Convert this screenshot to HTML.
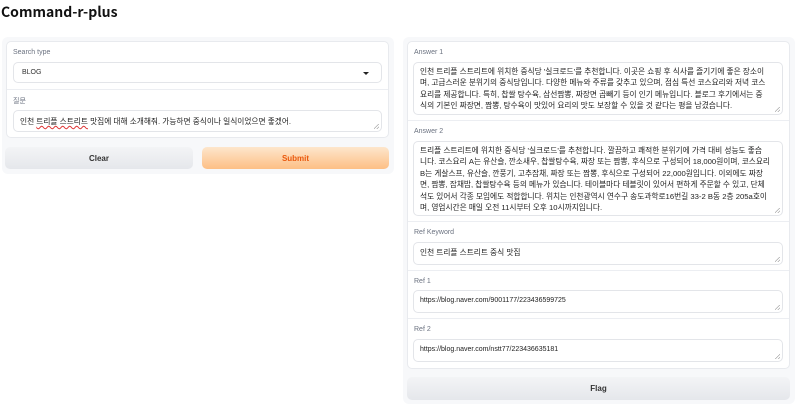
<!DOCTYPE html>
<html><head><meta charset="utf-8"><style>
*{box-sizing:border-box;margin:0;padding:0}
body{width:800px;height:408px;background:#fff;font-family:"Liberation Sans","Noto Sans CJK KR",sans-serif;position:relative;overflow:hidden;color:#1f2937}
.a{position:absolute}
.outer{background:#f7f8fa;border-radius:6px}
.inner{background:#fff;border:1px solid #e8eaee;border-radius:5px}
.lbl{font-size:7px;color:#6b7280}
.ta{background:#fff;border:1px solid #e3e5e9;border-radius:5px;font-size:7.7px;line-height:11.4px;padding:3px 6px;color:#222;white-space:nowrap;overflow:hidden}
.ta:after{content:"";position:absolute;right:2px;bottom:2px;width:5px;height:5px;background:linear-gradient(135deg,transparent 45%,#aaa 45%,#aaa 55%,transparent 55%,transparent 75%,#aaa 75%,#aaa 85%,transparent 85%)}
.sep{height:1px;background:#eceef2}
.btn{border-radius:5px;font-size:8px;font-weight:bold;display:flex;align-items:center;justify-content:center}
</style></head><body>
<div class="a" style="left:1px;top:2px;font-size:14px;font-weight:bold;color:#111;font-family:'Noto Sans CJK KR','Liberation Sans',sans-serif">Command-r-plus</div>

<div class="a outer" style="left:2px;top:37px;width:392px;height:137px"></div>
<div class="a inner" style="left:6px;top:41px;width:383px;height:97px"></div>
<div class="a lbl" style="left:13px;top:49px">Search type</div>
<div class="a" style="left:13px;top:62px;width:369px;height:21px;border:1px solid #e3e5e9;border-radius:5px;font-size:7px;padding:6px 8px;color:#333">BLOG</div>
<div class="a" style="left:363px;top:72px;width:0;height:0;border-left:3px solid transparent;border-right:3px solid transparent;border-top:3px solid #222"></div>
<div class="a sep" style="left:7px;top:89px;width:381px"></div>
<div class="a lbl" style="left:13px;top:96px">질문</div>
<div class="a ta" style="left:13px;top:110px;width:369px;height:22px;padding-top:5px">인천 <span style="text-decoration:underline wavy #d33;text-decoration-thickness:0.6px">트리플 스트리트</span> 맛집에 대해 소개해줘. 가능하면 중식이나 일식이었으면 좋겠어.</div>
<div class="a btn" style="left:5px;top:147px;width:188px;height:22px;background:linear-gradient(#f3f4f6,#e5e7eb);color:#333">Clear</div>
<div class="a btn" style="left:202px;top:147px;width:187px;height:22px;background:linear-gradient(#fde6cc,#fdbf85);color:#ea580c">Submit</div>

<div class="a outer" style="left:403px;top:37px;width:392px;height:367px"></div>
<div class="a inner" style="left:407px;top:41px;width:383px;height:328px"></div>
<div class="a lbl" style="left:414px;top:49px">Answer 1</div>
<div class="a ta" style="left:413px;top:62px;width:370px;height:53px">인천 트리플 스트리트에 위치한 중식당 '실크로드'를 추천합니다. 이곳은 쇼핑 후 식사를 즐기기에 좋은 장소이<br>며, 고급스러운 분위기의 중식당입니다. 다양한 메뉴와 주류를 갖추고 있으며, 점심 특선 코스요리와 저녁 코스<br>요리를 제공합니다. 특히, 찹쌀 탕수육, 삼선짬뽕, 짜장면 곱빼기 등이 인기 메뉴입니다. 블로그 후기에서는 중<br>식의 기본인 짜장면, 짬뽕, 탕수육이 맛있어 요리의 맛도 보장할 수 있을 것 같다는 평을 남겼습니다.</div>
<div class="a sep" style="left:408px;top:120px;width:381px"></div>
<div class="a lbl" style="left:414px;top:128px">Answer 2</div>
<div class="a ta" style="left:413px;top:141px;width:370px;height:75px">트리플 스트리트에 위치한 중식당 '실크로드'를 추천합니다. 깔끔하고 쾌적한 분위기에 가격 대비 성능도 좋습<br>니다. 코스요리 A는 유산슬, 깐소새우, 찹쌀탕수육, 짜장 또는 짬뽕, 후식으로 구성되어 18,000원이며, 코스요리<br>B는 게살스프, 유산슬, 깐풍기, 고추잡채, 짜장 또는 짬뽕, 후식으로 구성되어 22,000원입니다. 이외에도 짜장<br>면, 짬뽕, 잡채밥, 찹쌀탕수육 등의 메뉴가 있습니다. 테이블마다 테블릿이 있어서 편하게 주문할 수 있고, 단체<br>석도 있어서 각종 모임에도 적합합니다. 위치는 인천광역시 연수구 송도과학로16번길 33-2 B동 2층 205a호이<br>며, 영업시간은 매일 오전 11시부터 오후 10시까지입니다.</div>
<div class="a sep" style="left:408px;top:221px;width:381px"></div>
<div class="a lbl" style="left:414px;top:229px">Ref Keyword</div>
<div class="a ta" style="left:413px;top:242px;width:370px;height:23px;padding-top:4px">인천 트리플 스트리트 중식 맛집</div>
<div class="a sep" style="left:408px;top:270px;width:381px"></div>
<div class="a lbl" style="left:414px;top:278px">Ref 1</div>
<div class="a ta" style="left:413px;top:290px;width:370px;height:23px;padding-top:4px;font-size:7px">https://blog.naver.com/9001177/223436599725</div>
<div class="a sep" style="left:408px;top:318px;width:381px"></div>
<div class="a lbl" style="left:414px;top:326px">Ref 2</div>
<div class="a ta" style="left:413px;top:339px;width:370px;height:23px;padding-top:4px;font-size:7px">https://blog.naver.com/nstt77/223436635181</div>
<div class="a btn" style="left:407px;top:377px;width:383px;height:23px;background:linear-gradient(#f3f4f6,#e5e7eb);color:#333">Flag</div>
</body></html>
